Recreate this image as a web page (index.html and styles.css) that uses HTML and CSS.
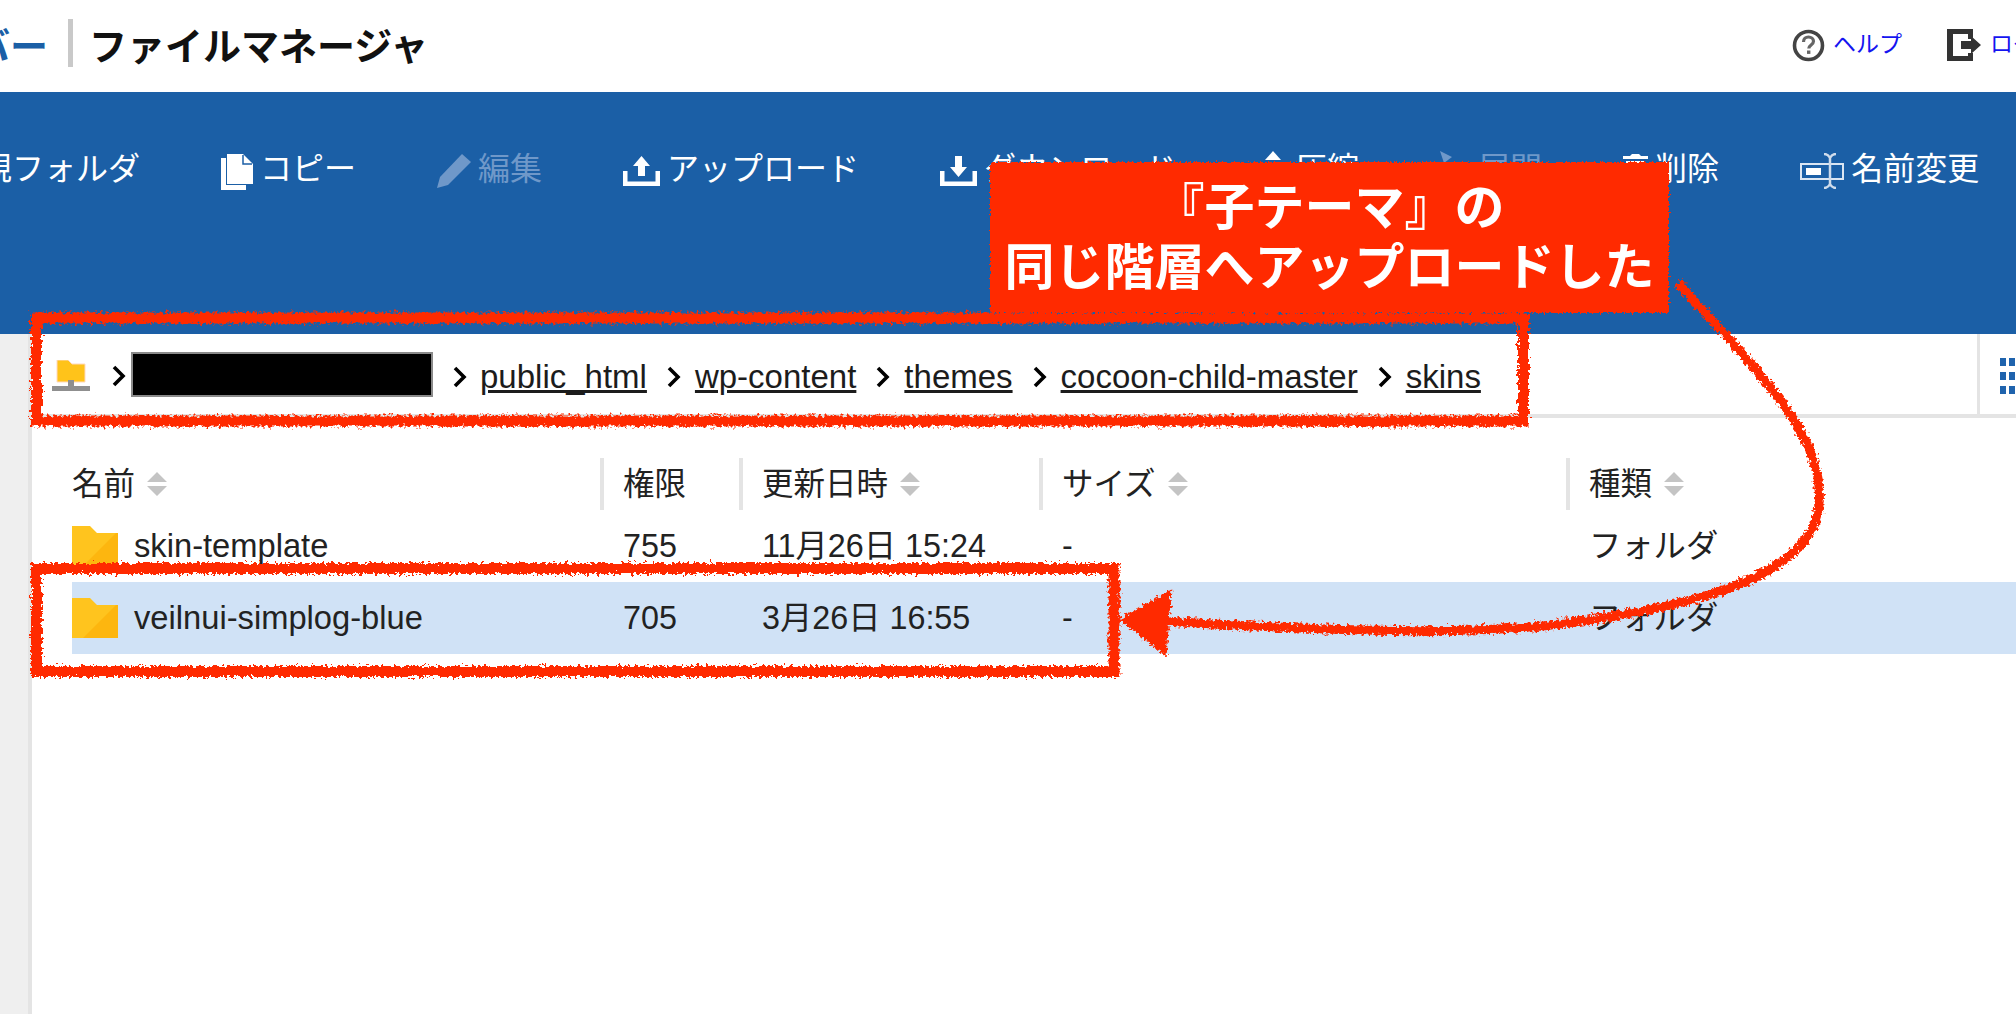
FILE: index.html
```html
<!DOCTYPE html>
<html lang="ja">
<head>
<meta charset="utf-8">
<title>ファイルマネージャ</title>
<link rel="stylesheet" href="styles.css">
</head>
<body>
<header class="topbar">
  <span class="brand">バー</span>
  <span class="brand-sep"></span>
  <h1 class="title">ファイルマネージャ</h1>
  <nav class="topnav">
    <a class="topnav-item" href="#">
      <svg class="ic-help" viewBox="0 0 33 33"><circle cx="16.5" cy="16.5" r="14" fill="#fff" stroke="#444" stroke-width="3.6"/><path d="M11.5 13c0-3.4 2.3-5 5-5s5 1.700 5 4.300c0 3.700-4.700 3.700-4.700 7.200" fill="none" stroke="#666" stroke-width="3.2"/><rect x="15" y="21.500" width="3.400" height="3.400" fill="#666"/></svg>
      <span class="nav-label">ヘルプ</span>
    </a>
    <a class="topnav-item" href="#">
      <svg class="ic-logout" viewBox="0 0 36 32"><path d="M26 10V0H0v32h26V24h-5v3H6V5h15v5z" fill="#333"/><path d="M14 12h10V7l10 9-10 9v-5H14z" fill="#333"/></svg>
      <span class="nav-label">ログアウト</span>
    </a>
  </nav>
</header>

<section class="toolbar">
  <div class="tool tool-first">新規フォルダ</div>
  <div class="tool">
    <svg class="ic-copy" viewBox="0 0 32 36"><path d="M0 4h5v27h20v5H0z" fill="#fff"/><path d="M6 0h16l10 10v20H6z" fill="#fff"/><path d="M22 1v9h9" fill="none" stroke="#1b5fa6" stroke-width="1.500"/></svg>
    コピー
  </div>
  <div class="tool tool-off">
    <svg class="ic-edit" viewBox="0 0 34 34"><path d="M25 0l9 8L11 31 0 34l3-11z" fill="#6f98c9"/></svg>
    編集
  </div>
  <div class="tool">
    <svg class="ic-updown" viewBox="0 0 37 30"><path d="M0 15h4.500v10.500h28V15H37v15H0z" fill="#fff"/><path d="M18.500 0l8.500 10h-5v10h-7V10h-5z" fill="#fff"/></svg>
    アップロード
  </div>
  <div class="tool">
    <svg class="ic-updown" viewBox="0 0 37 30"><path d="M0 15h4.500v10.500h28V15H37v15H0z" fill="#fff"/><path d="M18.500 21L10 11h5V0h7v11h5z" fill="#fff"/></svg>
    ダウンロード
  </div>
  <div class="tool">
    <svg class="ic-zip" viewBox="0 0 31 36"><path d="M16 0l8 9H8z" fill="#fff"/><rect x="2" y="12" width="28" height="20" fill="#fff"/></svg>
    圧縮
  </div>
  <div class="tool tool-off">
    <svg class="ic-unzip" viewBox="0 0 31 36"><path d="M0 0l12 6-8 6z" fill="#6f98c9"/><rect x="2" y="12" width="28" height="20" fill="#6f98c9"/></svg>
    展開
  </div>
  <div class="tool">
    <svg class="ic-trash" viewBox="0 0 25 36"><path d="M9 3h7l2 2h7v3H0V5h7z" fill="#fff"/><path d="M3 10h19v26H3z" fill="#fff"/></svg>
    削除
  </div>
  <div class="tool">
    <svg class="ic-rename" viewBox="0 0 44 36"><rect x="1" y="11" width="42" height="15" fill="none" stroke="#dbe6f3" stroke-width="2"/><rect x="6" y="15" width="15" height="7" fill="#fff"/><path d="M24 1c3 0 5 2 6 4 1-2 3-4 6-4M30 5v26M24 35c3 0 5-2 6-4 1 2 3 4 6 4" fill="none" stroke="#cfdcec" stroke-width="2.500"/></svg>
    名前変更
  </div>
</section>

<div class="workspace">
  <aside class="rail"></aside>
  <main class="main">
    <div class="crumbs">
      <svg class="ic-netfolder" viewBox="0 0 38 32"><path d="M5 0h11l4 4h13v18H5z" fill="#ffc31a" stroke="#ffd9c0"/><rect x="16" y="20" width="6" height="9" fill="#8f8f8f"/><rect x="0" y="26" width="38" height="5" fill="#8f8f8f"/></svg>
      <svg class="chev chev-first" viewBox="0 0 14 22"><path d="M2 2l9 9-9 9" fill="none" stroke="#000" stroke-width="3.600"/></svg>
      <span class="redacted"></span>
      <svg class="chev chev-second" viewBox="0 0 14 22"><path d="M2 2l9 9-9 9" fill="none" stroke="#000" stroke-width="3.600"/></svg>
      <a class="crumb" href="#">public_html</a>
      <svg class="chev" viewBox="0 0 14 22"><path d="M2 2l9 9-9 9" fill="none" stroke="#000" stroke-width="3.600"/></svg>
      <a class="crumb" href="#">wp-content</a>
      <svg class="chev" viewBox="0 0 14 22"><path d="M2 2l9 9-9 9" fill="none" stroke="#000" stroke-width="3.600"/></svg>
      <a class="crumb" href="#">themes</a>
      <svg class="chev" viewBox="0 0 14 22"><path d="M2 2l9 9-9 9" fill="none" stroke="#000" stroke-width="3.600"/></svg>
      <a class="crumb" href="#">cocoon-child-master</a>
      <svg class="chev" viewBox="0 0 14 22"><path d="M2 2l9 9-9 9" fill="none" stroke="#000" stroke-width="3.600"/></svg>
      <a class="crumb" href="#">skins</a>
      <div class="view-switch">
        <svg class="ic-grid" viewBox="0 0 16 36"><path d="M0 0h6v8H0zM9 0h6v8H9zM0 14h6v8H0zM9 14h6v8H9zM0 28h6v8H0zM9 28h6v8H9z" fill="#1f63ad"/></svg>
      </div>
    </div>

    <div class="table">
      <div class="row head">
        <div class="cell name">名前<svg class="sort" viewBox="0 0 20 24"><path d="M10 0l10 10H0zM0 14h20L10 24z" fill="#c4c4c4"/></svg></div>
        <div class="cell">権限</div>
        <div class="cell">更新日時<svg class="sort" viewBox="0 0 20 24"><path d="M10 0l10 10H0zM0 14h20L10 24z" fill="#c4c4c4"/></svg></div>
        <div class="cell">サイズ<svg class="sort" viewBox="0 0 20 24"><path d="M10 0l10 10H0zM0 14h20L10 24z" fill="#c4c4c4"/></svg></div>
        <div class="cell">種類<svg class="sort" viewBox="0 0 20 24"><path d="M10 0l10 10H0zM0 14h20L10 24z" fill="#c4c4c4"/></svg></div>
      </div>
      <div class="row">
        <div class="cell name"><svg class="folder" viewBox="0 0 46 40"><path d="M0 0h18l7 7h21v33H0z" fill="#ffc41e"/><path d="M11 40L44 7h2v33z" fill="#fdb60f"/></svg><span class="fname">skin-template</span></div>
        <div class="cell">755</div>
        <div class="cell">11月26日 15:24</div>
        <div class="cell">-</div>
        <div class="cell">フォルダ</div>
      </div>
      <div class="row selected">
        <div class="cell name"><svg class="folder" viewBox="0 0 46 40"><path d="M0 0h18l7 7h21v33H0z" fill="#ffc41e"/><path d="M11 40L44 7h2v33z" fill="#fdb60f"/></svg><span class="fname">veilnui-simplog-blue</span></div>
        <div class="cell">705</div>
        <div class="cell">3月26日 16:55</div>
        <div class="cell">-</div>
        <div class="cell">フォルダ</div>
      </div>
    </div>
  </main>
</div>

<svg class="markup" viewBox="0 0 2016 1014">
  <defs>
    <filter id="crayon" filterUnits="userSpaceOnUse" x="0" y="0" width="2016" height="1014">
      <feTurbulence type="fractalNoise" baseFrequency="0.32" numOctaves="3" seed="4"/>
      <feDisplacementMap in="SourceGraphic" scale="9" xChannelSelector="R" yChannelSelector="G"/>
    </filter>
    <filter id="edge" filterUnits="userSpaceOnUse" x="0" y="0" width="2016" height="1014">
      <feTurbulence type="fractalNoise" baseFrequency="0.5" numOctaves="2" seed="9"/>
      <feDisplacementMap in="SourceGraphic" scale="6" xChannelSelector="R" yChannelSelector="G"/>
    </filter>
  </defs>
  <g filter="url(#crayon)" fill="none" stroke="#ff2a00" stroke-width="11">
    <rect x="36.500" y="318" width="1487" height="103"/>
    <rect x="36.500" y="568.500" width="1077.500" height="103"/>
    <path d="M1678 283C1720 330 1775 385 1800 430C1825 475 1825 515 1805 540C1770 585 1680 610 1543 626C1480 632 1400 632 1300 628C1250 626 1210 624 1165 621" stroke-width="9"/>
    <path d="M1124 620L1168 595L1164 651z" fill="#ff2a00" stroke-width="6"/>
  </g>
  <rect class="callout-box" x="990" y="162" width="679" height="151" filter="url(#edge)"/>
</svg>
<div class="callout"><span>『子テーマ』の</span><span>同じ階層へアップロードした</span></div>
</body>
</html>
```
FILE: styles.css
```css
html, body {
  margin: 0;
  width: 2016px;
  height: 1014px;
  overflow: hidden;
  background: #fff;
  font-family: "Liberation Sans", "Noto Sans CJK JP", sans-serif;
  color: #222;
}
body { position: relative; }

.topbar {
  height: 92px;
  box-sizing: border-box;
  padding-bottom: 6px;
  display: flex;
  align-items: center;
  white-space: nowrap;
}
.brand {
  margin-left: -28px;
  font-size: 38px;
  font-weight: 700;
  color: #1b5fa6;
}
.brand-sep {
  width: 5px;
  height: 48px;
  margin: 0 16px 0 20px;
  background: #c9c9c9;
}
.title {
  margin: 0;
  font-size: 38px;
  font-weight: 700;
  color: #111;
}
.topnav {
  margin-left: auto;
  margin-right: -89px;
  padding-top: 4px;
  display: flex;
  gap: 45px;
  flex-shrink: 0;
}
.topnav-item {
  display: flex;
  align-items: center;
  gap: 8px;
  font-size: 23px;
  color: #1414f0;
  text-decoration: none;
}
.nav-label { padding-bottom: 6px; }
.ic-help { width: 33px; height: 33px; }
.ic-logout { width: 36px; height: 32px; margin-right: -1px; }

.toolbar {
  height: 242px;
  box-sizing: border-box;
  padding-top: 54px;
  background: #1b5fa6;
  display: flex;
  align-items: flex-start;
  gap: 81px;
  white-space: nowrap;
  font-size: 32px;
  line-height: 46px;
  color: #fff;
}
.tool {
  display: flex;
  align-items: center;
  gap: 7px;
  flex-shrink: 0;
}
.tool-first { margin-left: -52px; }
.tool-off { color: #6f98c9; }
.ic-copy { width: 32px; height: 36px; margin-top: 6px; }
.ic-edit { width: 34px; height: 34px; margin-top: 4px; }
.ic-updown { width: 37px; height: 30px; margin-top: 4px; }
.ic-zip { width: 31px; height: 36px; }
.ic-unzip { width: 31px; height: 36px; }
.ic-trash { width: 25px; height: 36px; }
.ic-rename { width: 44px; height: 36px; margin-top: 4px; }

.workspace {
  display: flex;
  height: 680px;
}
.rail {
  width: 28px;
  flex-shrink: 0;
  background: #efefef;
  border-right: 4px solid #e4e4e4;
}
.main { flex: 1; min-width: 0; }

.crumbs {
  height: 80px;
  border-bottom: 4px solid #e4e4e4;
  display: flex;
  align-items: center;
  font-size: 33px;
  line-height: 40px;
  white-space: nowrap;
}
.crumb { position: relative; top: 3px; color: #1c1c1c; text-decoration: underline; }
.ic-netfolder { width: 38px; height: 32px; margin: 3px 0 0 20px; flex-shrink: 0; }
.chev { width: 14px; height: 22px; margin: 6px 14px 0 20px; flex-shrink: 0; }
.chev-first { margin: 4px 5px 0 22px; }
.chev-second { margin-right: 13px; }
.redacted {
  width: 298px;
  height: 41px;
  background: #000;
  border: 2px solid #8a8a8a;
}
.view-switch {
  margin-left: auto;
  width: 39px;
  height: 80px;
  box-sizing: border-box;
  border-left: 3px solid #e4e4e4;
  padding: 24px 0 0 20px;
  flex-shrink: 0;
}
.ic-grid { width: 16px; height: 36px; display: block; }

.table { margin: 40px 0 0 40px; }
.row {
  display: grid;
  grid-template-columns: 528px 139px 300px 527px 1fr;
  height: 72px;
  font-size: 32.300px;
  line-height: 40px;
}
.row.head { height: 52px; font-size: 31.500px; }
.row.selected { background: #d0e2f6; }
.fname { font-size: 32.700px; }
.cell {
  display: flex;
  align-items: center;
  padding-left: 23px;
  white-space: nowrap;
}
.cell.name { padding-left: 0; }
.head .cell {
  border-left: 4px solid #e4e4e4;
  padding-left: 19px;
}
.head .cell.name { border-left: 0; padding-left: 0; }
.sort { width: 20px; height: 24px; margin-left: 12px; }
.folder { width: 46px; height: 40px; margin-right: 16px; flex-shrink: 0; }

.markup {
  position: absolute;
  left: 0;
  top: 0;
  width: 2016px;
  height: 1014px;
  pointer-events: none;
}
.callout-box { fill: #ff2a00; }
.callout {
  position: absolute;
  left: 990px;
  top: 162px;
  width: 679px;
  height: 151px;
  display: flex;
  flex-direction: column;
  align-items: center;
  justify-content: center;
  color: #fff;
  font-size: 50px;
  font-weight: 700;
  line-height: 60px;
  white-space: nowrap;
}
```
